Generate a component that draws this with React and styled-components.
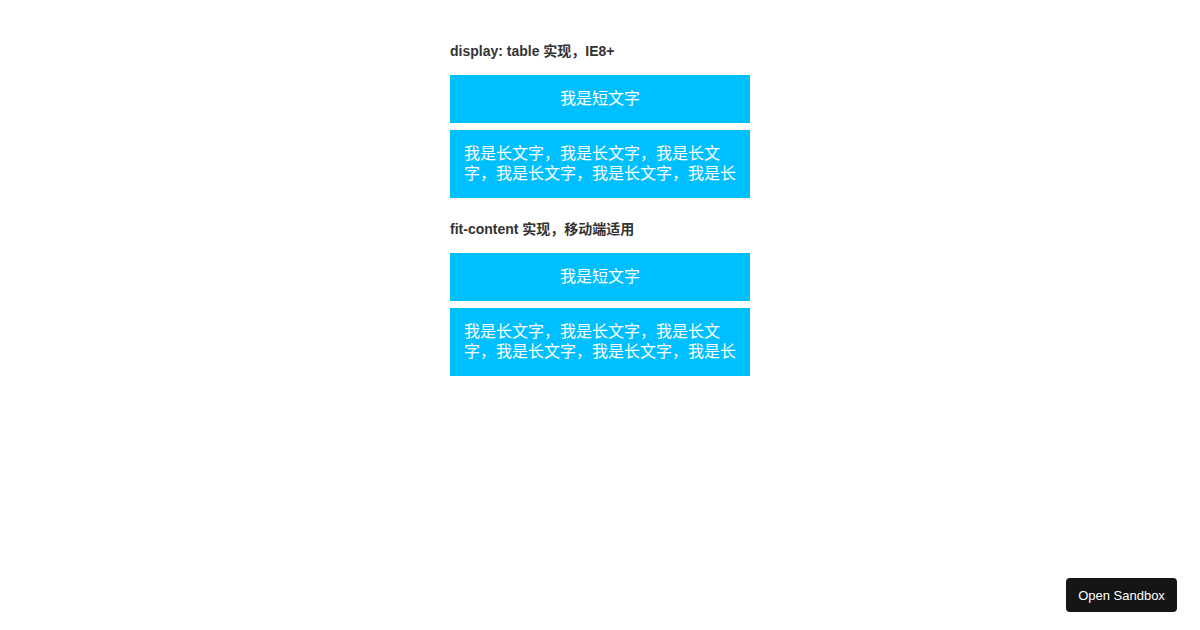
import React from "react";
import styled, { createGlobalStyle } from "styled-components";

const GlobalStyle = createGlobalStyle`
  html, body {
    margin: 0;
    padding: 0;
    background: #fff;
    font-family: "Liberation Sans", "Noto Sans CJK SC", sans-serif;
  }
`;

const shortText = "我是短文字";
const longText = "我是长文字，我是长文字，我是长文字，我是长文字，我是长文字，我是长";

const App = () => {
  return (
    <>
      <GlobalStyle />
      <Page>
        <Section>
          <Title>display: table 实现，IE8+</Title>
          <Box>
            <TableText>{shortText}</TableText>
          </Box>
          <Box>
            <TableText>{longText}</TableText>
          </Box>
        </Section>

        <Section>
          <Title>fit-content 实现，移动端适用</Title>
          <Box>
            <FitText>{shortText}</FitText>
          </Box>
          <Box>
            <FitText>{longText}</FitText>
          </Box>
        </Section>
      </Page>
      <SandboxButton>Open Sandbox</SandboxButton>
    </>
  );
};

export default App;

const Page = styled.div`
  width: 300px;
  margin: 0 auto;
  padding-top: 41px;
  display: flex;
  flex-direction: column;
  gap: 21px;
`;

const Section = styled.div`
  display: flex;
  flex-direction: column;
  gap: 7px;
`;

const Title = styled.div`
  font-size: 14px;
  line-height: 20px;
  font-weight: 700;
  color: #333;
  margin-bottom: 7px;
`;

const Box = styled.div`
  background: #00bfff;
  color: #fff;
  padding: 14px;
  font-size: 16px;
  line-height: 20px;
`;

const TableText = styled.div`
  display: table;
  margin: 0 auto;
`;

const FitText = styled.div`
  width: fit-content;
  margin: 0 auto;
`;

const SandboxButton = styled.button`
  position: fixed;
  right: 23px;
  bottom: 18px;
  width: 111px;
  height: 34px;
  border: none;
  border-radius: 4px;
  background: #151515;
  color: #fff;
  font-family: "Liberation Sans", sans-serif;
  font-size: 13px;
  cursor: pointer;
`;
